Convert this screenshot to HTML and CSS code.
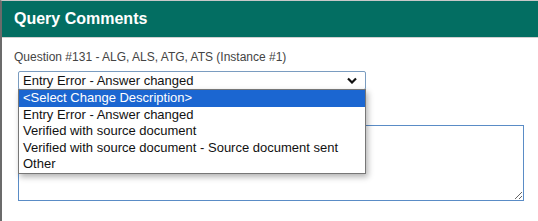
FILE: index.html
```html
<!DOCTYPE html>
<html lang="en">
<head>
  <meta charset="UTF-8" />
  <title>Query Comments</title>
  <link rel="stylesheet" href="styles.css">
</head>
<body>
  <div class="dialog">
    <div class="dialog-header">Query Comments</div>
    <div class="dialog-body">
      <div class="question">Question #131 - ALG, ALS, ATG, ATS (Instance #1)</div>
      <div class="select-wrap">
        <div class="select">
          <span>Entry Error - Answer changed</span>
          <svg class="chevron" width="10" height="7" viewBox="0 0 10 7">
            <path d="M1 1.5 L5 5.5 L9 1.5" fill="none" stroke="#111" stroke-width="2.2"/>
          </svg>
        </div>
        <ul class="dropdown">
          <li class="selected">&lt;Select Change Description&gt;</li>
          <li>Entry Error - Answer changed</li>
          <li>Verified with source document</li>
          <li>Verified with source document - Source document sent</li>
          <li>Other</li>
        </ul>
      </div>
      <textarea class="comment"></textarea>
    </div>
  </div>
</body>
</html>
```

FILE: styles.css
```css
html, body {
  margin: 0;
  padding: 0;
  background: #fff;
  font-family: "Liberation Sans", Arial, sans-serif;
}

.dialog {
  height: 221px;
  border-left: 2px solid #6b6b6b;
  border-top: 1px solid #c8c8c8;
  box-sizing: border-box;
}

.dialog-header {
  height: 36px;
  background: #036e62;
  color: #fff;
  font-size: 16px;
  font-weight: bold;
  line-height: 35px;
  padding-left: 12px;
  border-bottom: 1px solid #d0d0d0;
}

.dialog-body {
  padding: 12px 0 0 12px;
}

.question {
  font-size: 12px;
  color: #444;
  line-height: 15px;
}

.select-wrap {
  position: relative;
  margin: 6px 0 0 4px;
}

.select {
  width: 348px;
  height: 19px;
  box-sizing: border-box;
  border: 1px solid #7a9cc0;
  border-radius: 2px;
  display: flex;
  align-items: center;
  justify-content: space-between;
  padding: 0 8px 0 4px;
  font-size: 13px;
  color: #111;
}

.chevron {
  display: block;
}

.dropdown {
  position: absolute;
  top: 18px;
  left: 0;
  width: 348px;
  box-sizing: border-box;
  margin: 0;
  padding: 0;
  list-style: none;
  background: #fff;
  border: 1px solid #777;
  box-shadow: 2px 3px 6px rgba(0,0,0,0.3);
  font-size: 13px;
  color: #111;
  z-index: 2;
}

.dropdown li {
  height: 16.5px;
  line-height: 16px;
  padding-left: 4px;
}

.dropdown li.selected {
  background: #1b66d1;
  color: #fff;
}

.comment {
  display: block;
  margin: 35px 0 0 4px;
  width: 506px;
  height: 76px;
  box-sizing: border-box;
  border: 1px solid #5a8cc6;
  resize: both;
  font-family: "Liberation Sans", Arial, sans-serif;
}
```
